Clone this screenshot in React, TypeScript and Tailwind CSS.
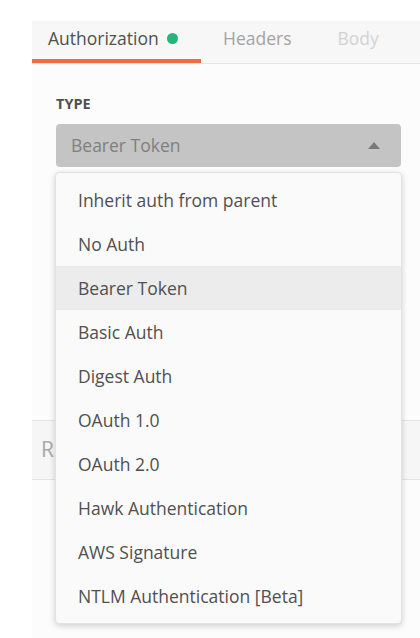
const items = [
  "Inherit auth from parent",
  "No Auth",
  "Bearer Token",
  "Basic Auth",
  "Digest Auth",
  "OAuth 1.0",
  "OAuth 2.0",
  "Hawk Authentication",
  "AWS Signature",
  "NTLM Authentication [Beta]",
];

export default function App() {
  return (
    <div
      className="relative w-[420px] h-[638px] overflow-hidden bg-white pl-[32px] pt-[21px]"
      style={{ fontFamily: '"Open Sans", "Liberation Sans", sans-serif' }}
    >
      <div className="flex h-full flex-col bg-[#fcfcfc]">
        {/* tabs */}
        <div className="flex h-[43px] shrink-0 items-stretch border-b border-[#e4e4e4] bg-[#f7f7f7]">
          <div className="flex w-[169px] items-center gap-[8px] border-b-[4px] border-[#f26b3a] pl-[16px] pb-[4px] text-[17.5px] text-[#505050]">
            Authorization
            <span className="h-[11px] w-[11px] rounded-full bg-[#27b37a]" />
          </div>
          <div className="flex items-center pl-[22px] pb-[8px] text-[17.5px] text-[#a3a3a3]">Headers</div>
          <div className="flex items-center pl-[46px] pb-[8px] text-[17.5px] text-[#d3d3d3]">Body</div>
        </div>

        {/* auth type */}
        <div className="pl-[24px] pr-[19px] pt-[30px]">
          <div className="text-[14.5px] font-bold leading-[20px] text-[#505050]">TYPE</div>
          <div className="mt-[10px] flex h-[43px] items-center justify-between rounded-[4px] bg-[#c4c4c4] pl-[15px] pr-[21px]">
            <span className="text-[17.5px] text-[#808080]">Bearer Token</span>
            <svg width="12" height="7" viewBox="0 0 12 7" className="mb-[1px]">
              <path d="M6 0 L12 7 L0 7 Z" fill="#7a7a7a" />
            </svg>
          </div>
        </div>

        {/* response strip, mostly hidden under the open menu */}
        <div className="mt-[253px] flex h-[60px] items-center border-y border-[#e4e4e4] bg-[#f6f6f6] pl-[9px]">
          <span className="text-[21px] text-[#a8a8a8]">R</span>
        </div>
      </div>

      {/* dropdown menu */}
      <div className="absolute left-[55px] top-[172px] w-[347px] rounded-[4px] border border-[#e2e2e2] bg-[#fafafa] py-[5px] shadow-[0_2px_6px_rgba(0,0,0,0.18)]">
        {items.map((item) => (
          <div
            key={item}
            className={
              "flex h-[44px] items-center pl-[22px] text-[17.5px] text-[#505050] " +
              (item === "Bearer Token" ? "bg-[#ececec]" : "")
            }
          >
            {item}
          </div>
        ))}
      </div>
    </div>
  );
}
